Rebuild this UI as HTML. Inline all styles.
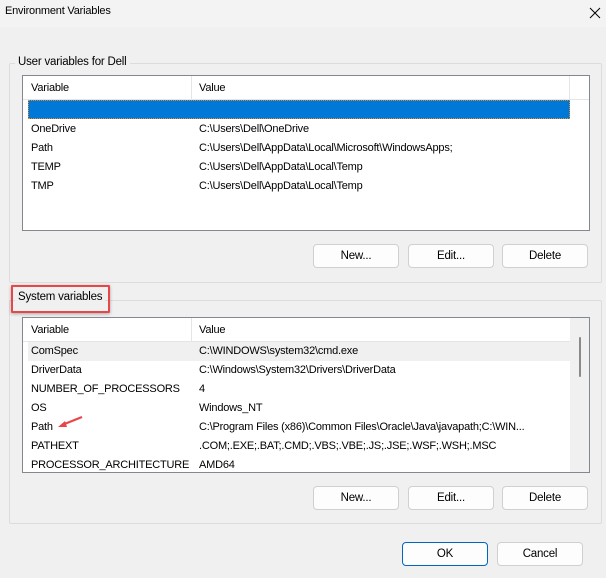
<!DOCTYPE html><html><head><style>
body{margin:0;width:606px;height:578px;background:#f0f0f0;font-family:"Liberation Sans",sans-serif;font-size:11px;letter-spacing:-0.2px;color:#000;position:relative;overflow:hidden}
.a{position:absolute}
.grp{position:absolute;border:1px solid #dcdcdc;border-radius:2px}
.lbl{position:absolute;background:#f0f0f0;padding:0 3px}
.lv{position:absolute;background:#fff;border:1px solid #828790;overflow:hidden}
.hdr{position:absolute;left:0;top:0;height:23px;width:100%;border-bottom:1px solid #e5e5e5}
.row{position:absolute;left:0;height:19px;width:100%}
.row span{position:absolute;top:3px;white-space:nowrap}
.btn{position:absolute;width:84px;height:22px;border:1px solid #d0d0d0;border-radius:4px;background:#fdfdfd;text-align:center;line-height:22px;font-size:11.5px}
</style></head><body>
<div class="a" style="left:0;top:0;width:606px;height:27px;background:#f3f3f3"></div>
<div class="a" style="left:5px;top:5px">Environment Variables</div>
<svg class="a" style="left:589px;top:7px" width="12" height="12"><path d="M1 1L11 11M11 1L1 11" stroke="#000" stroke-width="1"/></svg>

<div class="grp" style="left:9px;top:63px;width:591px;height:218px"></div>
<div class="lbl" style="left:15px;top:56px;font-size:11.5px">User variables for Dell</div>
<div class="lv" style="left:22px;top:75px;width:566px;height:154px">
<div class="hdr"><span class="a" style="left:8px;top:6px">Variable</span><div class="a" style="left:168px;top:0;width:1px;height:23px;background:#e5e5e5"></div><span class="a" style="left:176px;top:6px">Value</span><div class="a" style="left:546px;top:0;width:1px;height:23px;background:#e5e5e5"></div></div>
<div class="row" style="top:24px;left:5px;width:542px;height:19px;background:#0078d7;outline:1px dotted #e08a2a;outline-offset:-1px"></div>
<div class="row" style="top:44px"><span style="left:8px">OneDrive</span><span style="left:176px">C:\Users\Dell\OneDrive</span></div>
<div class="row" style="top:63px"><span style="left:8px">Path</span><span style="left:176px">C:\Users\Dell\AppData\Local\Microsoft\WindowsApps;</span></div>
<div class="row" style="top:82px"><span style="left:8px">TEMP</span><span style="left:176px">C:\Users\Dell\AppData\Local\Temp</span></div>
<div class="row" style="top:101px"><span style="left:8px">TMP</span><span style="left:176px">C:\Users\Dell\AppData\Local\Temp</span></div>
</div>
<div class="btn" style="left:313px;top:244px">New...</div>
<div class="btn" style="left:408px;top:244px">Edit...</div>
<div class="btn" style="left:502px;top:244px">Delete</div>

<div class="grp" style="left:9px;top:300px;width:591px;height:222px"></div>
<div class="lbl" style="left:15px;top:291px;font-size:11.5px">System variables</div>
<div class="a" style="left:11px;top:285px;width:95px;height:24px;border:2px solid #e8474a;border-radius:1px;box-shadow:0 1px 3px rgba(0,0,0,.3)"></div>
<div class="lv" style="left:22px;top:317px;width:566px;height:154px">
<div class="hdr"><span class="a" style="left:8px;top:6px">Variable</span><div class="a" style="left:168px;top:0;width:1px;height:23px;background:#e5e5e5"></div><span class="a" style="left:176px;top:6px">Value</span></div>
<div class="row" style="top:24px;left:5px;width:542px;background:#f0f0f0"></div>
<div class="row" style="top:24px"><span style="left:8px">ComSpec</span><span style="left:176px">C:\WINDOWS\system32\cmd.exe</span></div>
<div class="row" style="top:43px"><span style="left:8px">DriverData</span><span style="left:176px">C:\Windows\System32\Drivers\DriverData</span></div>
<div class="row" style="top:62px"><span style="left:8px">NUMBER_OF_PROCESSORS</span><span style="left:176px">4</span></div>
<div class="row" style="top:81px"><span style="left:8px">OS</span><span style="left:176px">Windows_NT</span></div>
<div class="row" style="top:100px"><span style="left:8px">Path</span><span style="left:176px">C:\Program Files (x86)\Common Files\Oracle\Java\javapath;C:\WIN...</span></div>
<div class="row" style="top:119px"><span style="left:8px">PATHEXT</span><span style="left:176px">.COM;.EXE;.BAT;.CMD;.VBS;.VBE;.JS;.JSE;.WSF;.WSH;.MSC</span></div>
<div class="row" style="top:138px"><span style="left:8px">PROCESSOR_ARCHITECTURE</span><span style="left:176px">AMD64</span></div>
<div class="a" style="left:547px;top:0;width:19px;height:154px;background:#f0f0f0"></div>
<div class="a" style="left:556px;top:19px;width:2px;height:40px;background:#8a8a8a;border-radius:1px"></div>
</div>
<svg class="a" style="left:56px;top:414px" width="30" height="16"><path d="M26 3 L6 11" stroke="#e8474a" stroke-width="2.2" fill="none"/><path d="M2 13 L9 7 L11 13 Z" fill="#e8474a"/></svg>
<div class="btn" style="left:313px;top:486px">New...</div>
<div class="btn" style="left:408px;top:486px">Edit...</div>
<div class="btn" style="left:502px;top:486px">Delete</div>
<div class="btn" style="left:402px;top:542px;border-color:#0067c0">OK</div>
<div class="btn" style="left:497px;top:542px">Cancel</div>
</body></html>
